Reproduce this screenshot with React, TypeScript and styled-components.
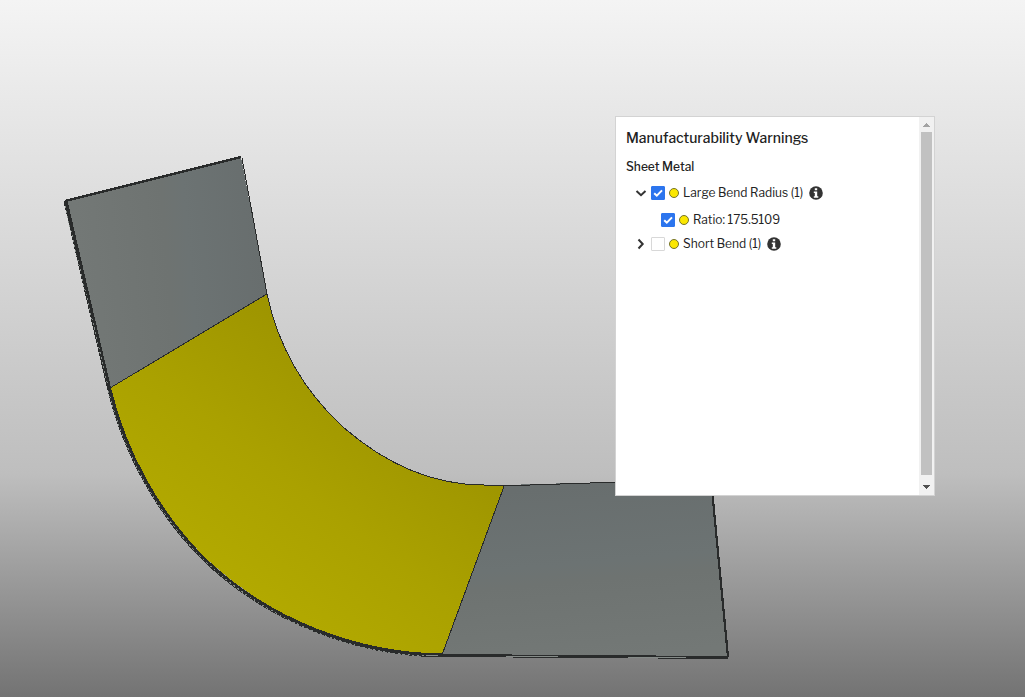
import React, { useState } from "react";
import styled, { createGlobalStyle } from "styled-components";

const GlobalStyle = createGlobalStyle`
  *, *::before, *::after { box-sizing: border-box; }
  body {
    margin: 0;
    font-family: "Libre Franklin", Roboto, "Liberation Sans", sans-serif;
    color: #222222;
  }
`;

const Viewport = styled.main`
  position: relative;
  min-height: 100vh;
  display: grid;
  overflow: hidden;
  background: linear-gradient(#f4f4f4, #bebebe 68%, #737373);
`;

const ModelCanvas = styled.svg`
  width: 100%;
  height: 100vh;
  display: block;
`;

const Panel = styled.aside`
  position: absolute;
  top: 116px;
  right: 90px;
  width: 320px;
  height: 380px;
  display: flex;
  background: #ffffff;
  border: 1px solid #d3d3d3;
`;

const PanelBody = styled.div`
  flex: 1;
  padding: 10px;
`;

const Title = styled.h1`
  margin: 0;
  font-size: 14px;
  line-height: 22px;
  font-weight: 500;
`;

const GroupTitle = styled.h2`
  margin: 8px 0 0;
  font-size: 12px;
  line-height: 20px;
  font-weight: 500;
`;

const List = styled.ul`
  list-style: none;
  margin: 0;
  padding: 4px 0 0 9px;
`;

const Row = styled.div<{ $nested?: boolean }>`
  display: flex;
  align-items: center;
  height: 24px;
  padding-left: ${(p) => (p.$nested ? 26 : 0)}px;
  margin-top: ${(p) => (p.$nested ? 3 : 0)}px;
`;

const IconButton = styled.button`
  display: flex;
  align-items: center;
  justify-content: center;
  width: 14px;
  height: 14px;
  padding: 0;
  border: 0;
  background: none;
  color: #333333;
`;

const Expander = styled(IconButton)`
  width: 12px;
  margin-right: 4px;
`;

const Check = styled.span`
  display: grid;
  width: 14px;
  height: 14px;
  > * { grid-area: 1 / 1; }
  svg { pointer-events: none; }
`;

const CheckInput = styled.input`
  appearance: none;
  width: 14px;
  height: 14px;
  margin: 0;
  border: 1px solid #d8d8d8;
  border-radius: 1px;
  background: #ffffff;
  &:checked {
    background: #2c75ee;
    border-color: #2c75ee;
  }
`;

const Dot = styled.span`
  width: 10px;
  height: 10px;
  margin: 0 4px;
  border: 1px solid #75732b;
  border-radius: 50%;
  background: #fbe700;
`;

const Label = styled.label`
  margin-right: 6px;
  font-size: 12px;
  line-height: 20px;
  white-space: nowrap;
`;

const Scrollbar = styled.div`
  width: 15px;
  display: flex;
  flex-direction: column;
  align-items: center;
  background: #f1f1f1;
`;

const ScrollButton = styled.button<{ $dim?: boolean }>`
  width: 15px;
  height: ${(p) => (p.$dim ? 15 : 20)}px;
  padding: ${(p) => (p.$dim ? 0 : 4)}px 0 0;
  border: 0;
  background: none;
  display: flex;
  align-items: center;
  justify-content: center;
  color: ${(p) => (p.$dim ? "#a3a3a3" : "#505050")};
`;

const Thumb = styled.div`
  flex: 1;
  width: 11px;
  background: #c1c1c1;
`;

function Chevron({ open }: { open: boolean }) {
  return (
    <svg width="12" height="12" viewBox="0 0 12 12" fill="none" stroke="currentColor" strokeWidth="2">
      <path d={open ? "M1.5 4 L6 8.2 L10.5 4" : "M3.5 1.5 L7.7 6 L3.5 10.5"} />
    </svg>
  );
}

function InfoIcon() {
  return (
    <svg width="14" height="14" viewBox="0 0 14 14">
      <circle cx="7" cy="7" r="6.8" fill="currentColor" />
      <path d="M5.8 2.2H8.2V4.2H5.8Z M4.8 5.4H8.2V10.2H9.3V11.8H4.8V10.2H5.8V7H4.8Z" fill="#fff" />
    </svg>
  );
}

function CheckBox({ id, initial }: { id: string; initial: boolean }) {
  const [on, setOn] = useState(initial);
  return (
    <Check>
      <CheckInput id={id} type="checkbox" checked={on} onChange={() => setOn(!on)} />
      {on && (
        <svg width="14" height="14" viewBox="0 0 14 14" fill="none" stroke="#fff" strokeWidth="2">
          <path d="M3.2 7.2 L5.8 9.7 L11 4.4" />
        </svg>
      )}
    </Check>
  );
}

interface WarningProps {
  id: string;
  label: string;
  checked: boolean;
  children?: React.ReactNode;
}

function Warning({ id, label, checked, children }: WarningProps) {
  const [open, setOpen] = useState(Boolean(children));
  return (
    <li>
      <Row>
        <Expander aria-label={`Toggle ${label}`} aria-expanded={open} onClick={() => setOpen(!open)}>
          <Chevron open={open} />
        </Expander>
        <CheckBox id={id} initial={checked} />
        <Dot />
        <Label htmlFor={id}>{label}</Label>
        <IconButton aria-label={`About ${label}`}>
          <InfoIcon />
        </IconButton>
      </Row>
      {open && children}
    </li>
  );
}

const INNER = "C278 346 304 391 343 427 C382 461 430 485 484 485";
const OUTER_BACK = "C357 653 271 619 210 562 C161 516 126 453 110 388";

function SheetMetalModel() {
  return (
    <ModelCanvas viewBox="0 0 1025 697" preserveAspectRatio="xMidYMid slice" role="img" aria-label="Bent sheet metal part">
      <defs>
        <linearGradient id="wall" gradientUnits="userSpaceOnUse" x1="80" y1="270" x2="262" y2="255">
          <stop offset="0" stopColor="#737876" />
          <stop offset="0.48" stopColor="#6e7371" />
          <stop offset="0.6" stopColor="#6c7373" />
          <stop offset="1" stopColor="#686e6e" />
        </linearGradient>
        <linearGradient id="floor" gradientUnits="userSpaceOnUse" x1="590" y1="484" x2="605" y2="657">
          <stop offset="0" stopColor="#686e6e" />
          <stop offset="0.45" stopColor="#6c7373" />
          <stop offset="0.55" stopColor="#6e7371" />
          <stop offset="1" stopColor="#737876" />
        </linearGradient>
        <linearGradient id="bend" gradientUnits="userSpaceOnUse" x1="220" y1="590" x2="375" y2="385">
          <stop offset="0" stopColor="#b3aa00" />
          <stop offset="0.5" stopColor="#aaa100" />
          <stop offset="1" stopColor="#9e9500" />
        </linearGradient>
      </defs>
      <g shapeRendering="crispEdges" strokeLinejoin="round">
        <path d="M66 201 L241 157 L267 294 L110 388 Z" fill="url(#wall)" />
        <path d={`M267 294 ${INNER} L504.5 485 L442 655 ${OUTER_BACK} Z`} fill="url(#bend)" />
        <path d="M504.5 485 L711 479 L728 657 L442 655 Z" fill="url(#floor)" />
        <g fill="none" stroke="#292b2b" strokeWidth="1">
          <path d={`M242 158 L267 294 ${INNER} L530 485 L711 479`} />
          <path d="M110 388 L267 294 M504.5 485 L442 655" />
          <path d="M65 201 L241 157 M711 479 L728 657" strokeWidth="2.2" />
          {/* the thin side wall, seen edge-on */}
          <path
            d="M65.5 201 L109 388 C124.5 453 159.5 517 208.500 563.500 C270 620.500 356 654.500 442 655.500"
            strokeWidth="4"
          />
          <path d="M440 655.500 L728 657.500" strokeWidth="3" />
        </g>
        <g fill="none" stroke="#858b88" strokeWidth="1">
          <path d="M65 206 L108 386" strokeDasharray="2 3" />
          <path d="M108.500 391 C124 454 158.500 517 208 564 C270 621 350 653 425 656" strokeDasharray="2 3" />
          <path d="M426 655.500 H438 M506 656.500 H558 M628 657.500 H686" />
        </g>
      </g>
    </ModelCanvas>
  );
}

export default function App() {
  return (
    <>
      <GlobalStyle />
      <Viewport>
        <SheetMetalModel />
        <Panel>
          <PanelBody>
            <Title>Manufacturability Warnings</Title>
            <GroupTitle>Sheet Metal</GroupTitle>
            <List>
              <Warning id="large-bend" label="Large Bend Radius (1)" checked>
                <Row $nested>
                  <CheckBox id="ratio" initial />
                  <Dot />
                  <Label htmlFor="ratio">Ratio: 175.5109</Label>
                </Row>
              </Warning>
              <Warning id="short-bend" label="Short Bend (1)" checked={false} />
            </List>
          </PanelBody>
          <Scrollbar>
            <ScrollButton $dim aria-label="Scroll up">
              <svg width="7" height="4" viewBox="0 0 7 4" fill="currentColor" shapeRendering="crispEdges">
                <path d="M3 0H4V1H5V2H6V3H7V4H0V3H1V2H2V1H3Z" />
              </svg>
            </ScrollButton>
            <Thumb />
            <ScrollButton aria-label="Scroll down">
              <svg width="7" height="4" viewBox="0 0 7 4" fill="currentColor" shapeRendering="crispEdges">
                <path d="M0 0H7V1H6V2H5V3H4V4H3V3H2V2H1V1H0Z" />
              </svg>
            </ScrollButton>
          </Scrollbar>
        </Panel>
      </Viewport>
    </>
  );
}
